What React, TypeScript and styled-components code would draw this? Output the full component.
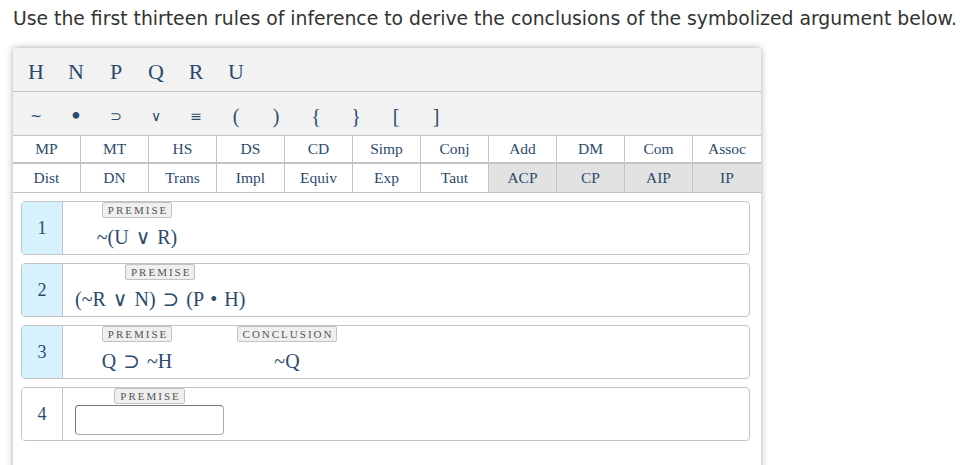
import React from "react"
import styled, { createGlobalStyle } from "styled-components"

const INK = "#2c4a6e"
const SERIF = `"Liberation Serif", "DejaVu Serif", serif`

const Global = createGlobalStyle`
	body{
		margin:0;
		background:#fff;
		font-family:"DejaVu Sans", Verdana, sans-serif;
	}
`

const variables = ["H", "N", "P", "Q", "R", "U"]
const operators = [
	{ s: "~", small: true },
	{ s: "•", big: true },
	{ s: "⊃", small: true },
	{ s: "∨", small: true },
	{ s: "≡", small: true },
	{ s: "(" },
	{ s: ")" },
	{ s: "{" },
	{ s: "}" },
	{ s: "[" },
	{ s: "]" },
]
const rules = [
	["MP", "MT", "HS", "DS", "CD", "Simp", "Conj", "Add", "DM", "Com", "Assoc"],
	["Dist", "DN", "Trans", "Impl", "Equiv", "Exp", "Taut", "ACP", "CP", "AIP", "IP"],
]
const shaded = ["ACP", "CP", "AIP", "IP"]

type Item = { label: string; formula?: string; input?: boolean }
const lines: { n: number; given: boolean; items: Item[] }[] = [
	{ n: 1, given: true, items: [{ label: "PREMISE", formula: "~(U ∨ R)" }] },
	{ n: 2, given: true, items: [{ label: "PREMISE", formula: "(~R ∨ N) ⊃ (P • H)" }] },
	{
		n: 3,
		given: true,
		items: [
			{ label: "PREMISE", formula: "Q ⊃ ~H" },
			{ label: "CONCLUSION", formula: "~Q" },
		],
	},
	{ n: 4, given: false, items: [{ label: "PREMISE", input: true }] },
]

export default function App() {
	return <>
		<Global />
		<Heading>Use the first thirteen rules of inference to derive the conclusions of the symbolized argument below.</Heading>
		<Panel>
			<SymbolRow>
				{variables.map(v => <VarKey key={v}>{v}</VarKey>)}
			</SymbolRow>
			<SymbolRow>
				{operators.map(o => <OpKey key={o.s} $small={o.small} $big={o.big}>{o.s}</OpKey>)}
			</SymbolRow>
			<RuleGrid>
				{rules.flat().map(r => <RuleCell key={r} $shaded={shaded.includes(r)}>{r}</RuleCell>)}
			</RuleGrid>
			<Lines>
				{lines.map(l => (
					<LineBox key={l.n}>
						<LineNo $given={l.given}>{l.n}</LineNo>
						<LineBody>
							{l.items.map(it => (
								<Entry key={it.label}>
									<Tag>{it.label}</Tag>
									{it.input ? <FormulaInput /> : <Formula>{it.formula}</Formula>}
								</Entry>
							))}
						</LineBody>
					</LineBox>
				))}
			</Lines>
		</Panel>
	</>
}

const Heading = styled("div")`
	padding:7px 0 0 13px;
	height:48px;
	box-sizing:border-box;
	font-size:18.8px;
	line-height:24px;
	color:#333;
	white-space:nowrap;
`
const Panel = styled("div")`
	margin-left:13px;
	width:748px;
	background:#fff;
	border-radius:4px 4px 0 0;
	box-shadow:0 0 7px rgba(0,0,0,0.35);
	overflow:hidden;
`
const SymbolRow = styled("div")`
	display:flex;
	align-items:center;
	padding-left:3px;
	height:43px;
	background:#f2f2f2;
	border-bottom:1px solid #c4c4c4;
`
const VarKey = styled("div")`
	width:40px;
	text-align:center;
	font-family:${SERIF};
	font-size:22px;
	color:${INK};
	padding-top:4px;
`
const OpKey = styled("div")<{ $small?: boolean; $big?: boolean }>`
	width:40px;
	text-align:center;
	font-family:${p => p.$small ? `"DejaVu Sans", sans-serif` : SERIF};
	font-size:${p => p.$small ? "14px" : p.$big ? "28px" : "20px"};
	line-height:24px;
	color:${INK};
	padding-top:4px;
`
const RuleGrid = styled("div")`
	display:grid;
	grid-template-columns:repeat(11, 1fr);
	grid-auto-rows:28px;
	border-bottom:1px solid #c4c4c4;
`
const RuleCell = styled("div")<{ $shaded?: boolean }>`
	display:flex;
	align-items:center;
	justify-content:center;
	font-family:${SERIF};
	font-size:15.5px;
	color:${INK};
	background:${p => p.$shaded ? "#e2e2e2" : "#fff"};
	border-right:1px solid #c4c4c4;
	&:nth-child(11n){
		border-right:none;
	}
	&:nth-child(-n+11){
		border-bottom:2px solid #c4c4c4;
	}
`
const Lines = styled("div")`
	display:flex;
	flex-direction:column;
	gap:8px;
	padding:8px 11px 40px 8px;
`
const LineBox = styled("div")`
	display:flex;
	height:54px;
	box-sizing:border-box;
	border:1px solid #c4c4c4;
	border-radius:4px;
	overflow:hidden;
`
const LineNo = styled("div")<{ $given: boolean }>`
	width:40px;
	flex-shrink:0;
	display:flex;
	align-items:center;
	justify-content:center;
	background:${p => p.$given ? "#d7f1fd" : "#fff"};
	border-right:1px solid #c4c4c4;
	font-family:${SERIF};
	font-size:18px;
	color:${INK};
`
const LineBody = styled("div")`
	display:flex;
	gap:26px;
	padding-left:12px;
`
const Entry = styled("div")`
	display:flex;
	flex-direction:column;
	align-items:center;
	min-width:124px;
`
const Tag = styled("div")`
	height:16px;
	box-sizing:border-box;
	padding:0 3px 0 5px;
	border:1px solid #c2c2c2;
	border-radius:2px;
	background:#efefef;
	font-family:${SERIF};
	font-size:11px;
	line-height:14px;
	letter-spacing:2px;
	color:#555;
`
const Formula = styled("div")`
	margin-top:7px;
	font-family:${SERIF};
	font-size:20px;
	line-height:24px;
	color:${INK};
	white-space:pre;
	word-spacing:2px;
`
const FormulaInput = styled("input")`
	margin-top:1px;
	width:149px;
	height:30px;
	box-sizing:border-box;
	border:1px solid #aaa;
	border-top-color:#777;
	border-left-color:#777;
	border-radius:4px;
	background:#fff;
`
